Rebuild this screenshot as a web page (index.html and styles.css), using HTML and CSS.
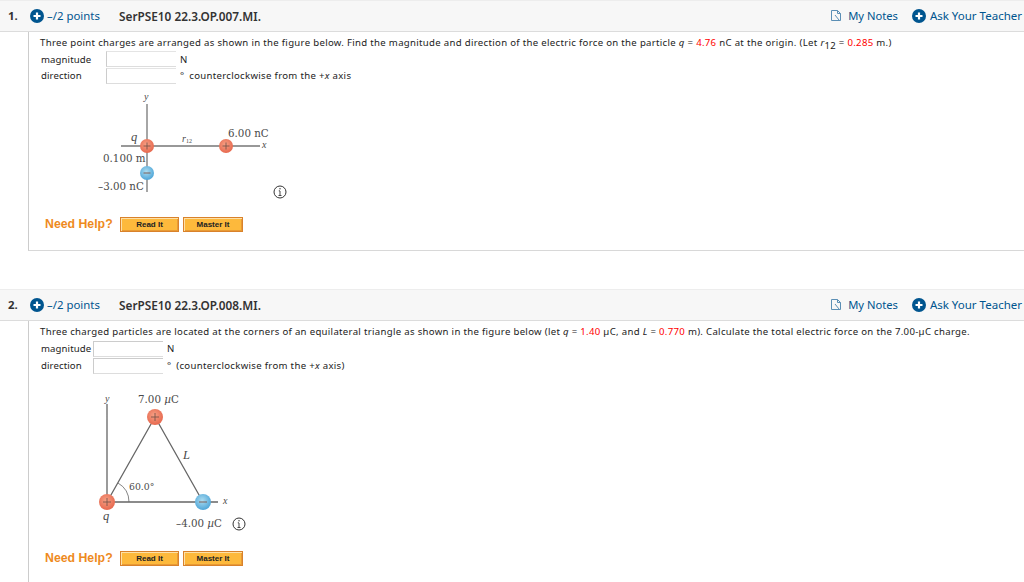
FILE: index.html
```html
<!DOCTYPE html>
<html lang="en">

<head>
  <meta charset="UTF-8" />
  <title>SerPSE10 Assignment</title>
  <link rel="stylesheet" href="styles.css">
</head>

<body>
  <div class="question first">
    <div class="q-header">
      <span class="q-number">1.</span>
      <svg class="plus-icon" viewBox="0 0 14 14"><circle cx="7" cy="7" r="7" /><path d="M7 3.500v7M3.500 7h7" /></svg>
      <span class="q-points">–/2 points</span>
      <span class="q-code">SerPSE10 22.3.OP.007.MI.</span>
      <span class="q-links">
        <svg class="notes-icon" viewBox="0 0 10 11"><path d="M.5.5h6l3 3v7h-9zM6.500.5v3h3M4 5l4 5" /></svg>
        <span class="notes-link">My Notes</span>
        <svg class="plus-icon" viewBox="0 0 14 14"><circle cx="7" cy="7" r="7" /><path d="M7 3.500v7M3.500 7h7" /></svg>
        <span>Ask Your Teacher</span>
      </span>
    </div>
    <div class="q-body body-one">
      <p class="q-text">Three point charges are arranged as shown in the figure below. Find the magnitude and direction of the electric force on the particle <i>q</i> = <span class="red">4.76</span> nC at the origin. (Let <i>r</i><sub>12</sub> = <span class="red">0.285</span> m.)</p>
      <div class="answers wide-label">
        <span class="answer-label">magnitude</span><span class="answer-box open"></span><span>N</span>
        <span class="answer-label">direction</span><span class="answer-box open"></span><span><span class="degree">°</span> counterclockwise from the +<i>x</i> axis</span>
      </div>
      <svg class="figure figure-one" viewBox="0 0 250 115">
        <defs>
          <radialGradient id="pos-fill" cx="45%" cy="40%" r="60%">
            <stop offset="0" stop-color="#f6a186" />
            <stop offset="1" stop-color="#e7684e" />
          </radialGradient>
          <radialGradient id="neg-fill" cx="45%" cy="40%" r="60%">
            <stop offset="0" stop-color="#acdcf0" />
            <stop offset="1" stop-color="#4fa6d8" />
          </radialGradient>
        </defs>
        <g class="axis">
          <path d="M107 10v88M81 52h139" />
        </g>
        <circle class="pos" cx="107" cy="52" r="7" />
        <circle class="pos" cx="186" cy="52" r="7" />
        <circle class="neg" cx="107" cy="79" r="7" />
        <path class="sign" d="M103.500 52h7M107 48.500v7M182.500 52h7M186 48.500v7M103.500 79h7" />
        <text class="fig-italic" x="104" y="6">y</text>
        <text class="fig-italic big" x="91" y="47">q</text>
        <text class="fig-italic" x="142" y="48">r<tspan class="fig-small" dy="1">12</tspan></text>
        <text class="fig-text" x="188" y="43">6.00 nC</text>
        <text class="fig-italic" x="222" y="54">x</text>
        <text class="fig-text" x="63" y="68">0.100 m</text>
        <text class="fig-text" x="58" y="96">–3.00 nC</text>
        <g class="info">
          <circle cx="240" cy="98" r="6" />
          <path d="M240 97v4M238.500 101.500h3M238.800 96.800h1.200" />
          <circle class="dot" cx="240" cy="94.800" r=".7" />
        </g>
      </svg>
      <div class="help-row">
        <span class="need-help">Need Help?</span>
        <span class="help-btn read">Read It</span>
        <span class="help-btn">Master It</span>
      </div>
    </div>
  </div>

  <div class="question">
    <div class="q-header">
      <span class="q-number">2.</span>
      <svg class="plus-icon" viewBox="0 0 14 14"><circle cx="7" cy="7" r="7" /><path d="M7 3.500v7M3.500 7h7" /></svg>
      <span class="q-points">–/2 points</span>
      <span class="q-code">SerPSE10 22.3.OP.008.MI.</span>
      <span class="q-links">
        <svg class="notes-icon" viewBox="0 0 10 11"><path d="M.5.5h6l3 3v7h-9zM6.500.5v3h3M4 5l4 5" /></svg>
        <span class="notes-link">My Notes</span>
        <svg class="plus-icon" viewBox="0 0 14 14"><circle cx="7" cy="7" r="7" /><path d="M7 3.500v7M3.500 7h7" /></svg>
        <span>Ask Your Teacher</span>
      </span>
    </div>
    <div class="q-body body-two">
      <p class="q-text">Three charged particles are located at the corners of an equilateral triangle as shown in the figure below (let <i>q</i> = <span class="red">1.40</span> µC, and <i>L</i> = <span class="red">0.770</span> m). Calculate the total electric force on the 7.00-µC charge.</p>
      <div class="answers">
        <span class="answer-label">magnitude</span><span class="answer-box"></span><span>N</span>
        <span class="answer-label">direction</span><span class="answer-box"></span><span><span class="degree">°</span> (counterclockwise from the +<i>x</i> axis)</span>
      </div>
      <svg class="figure figure-two" viewBox="0 0 250 150">
        <g class="axis dark">
          <path d="M67 21v98M67 119h111M67 119l48-85 48 85" />
          <path class="arc" d="M89 119a22 22 0 0 0-11-19" />
        </g>
        <circle class="pos" cx="67" cy="119" r="8" />
        <circle class="pos" cx="115" cy="34" r="8" />
        <circle class="neg" cx="163" cy="119" r="8" />
        <path class="sign" d="M63 119h8M67 115v8M111 34h8M115 30v8M159 119h8" />
        <text class="fig-italic" x="65" y="19">y</text>
        <text class="fig-text" x="98" y="20">7.00 <tspan class="fig-greek">µ</tspan>C</text>
        <text class="fig-italic big" x="143" y="76">L</text>
        <text class="fig-text small" x="89" y="107">60.0°</text>
        <text class="fig-italic" x="183" y="121">x</text>
        <text class="fig-italic big" x="63" y="137">q</text>
        <text class="fig-text" x="136" y="144">–4.00 <tspan class="fig-greek">µ</tspan>C</text>
        <g class="info">
          <circle cx="199" cy="141" r="6" />
          <path d="M199 140v4M197.500 144.500h3M197.800 139.800h1.200" />
          <circle class="dot" cx="199" cy="137.800" r=".7" />
        </g>
      </svg>
      <div class="help-row">
        <span class="need-help">Need Help?</span>
        <span class="help-btn read">Read It</span>
        <span class="help-btn">Master It</span>
      </div>
    </div>
  </div>
</body>

</html>
```

FILE: styles.css
```css
/* Base */
* {
  box-sizing: border-box;
}

body {
  margin: 0;
  width: 1024px;
  height: 582px;
  overflow: hidden;
  background-color: #fff;
  font-family: "Noto Sans", "Open Sans", sans-serif;
  font-size: 9.6px;
  letter-spacing: .31px;
  color: #222;
}

/* Question header */
.question.first {
  margin-bottom: 38px;
}

.q-header {
  display: flex;
  align-items: center;
  height: 32px;
  padding: 0 0 1px 8px;
  background-color: #f7f7f7;
  border-top: 1px solid #ededed;
  border-bottom: 1px solid #dcdcdc;
  font-size: 11.4px;
  letter-spacing: 0;
  color: #333;
}

.q-number {
  width: 22px;
  font-weight: 700;
}

.plus-icon {
  width: 14px;
  height: 14px;
  flex-shrink: 0;
}

.plus-icon circle {
  fill: #00558f;
}

.plus-icon path {
  stroke: #fff;
  stroke-width: 2.2;
  fill: none;
}

.q-points {
  width: 72px;
  margin-left: 3px;
  color: #00558f;
}

.q-code {
  font-weight: 600;
  font-size: 11.8px;
}

.q-links {
  display: flex;
  align-items: center;
  margin-left: auto;
  padding-right: 2px;
  font-size: 11.5px;
  color: #00558f;
}

.notes-icon {
  width: 10px;
  height: 11px;
  margin-right: 7px;
  fill: none;
  stroke: #5b8fb5;
  stroke-width: 1;
}

.notes-link {
  margin-right: 14px;
  font-size: 11.2px;
}

.q-links .plus-icon {
  margin-right: 4px;
}

/* Question body */
.q-body {
  margin-left: 28px;
  padding-left: 11px;
  border-left: 1px solid #ccc;
}

.body-one {
  height: 219px;
  border-bottom: 1px solid #d8d8d8;
}

.body-two {
  height: 262px;
}

.q-text {
  margin: 0;
  padding-top: 4px;
  height: 19px;
  line-height: 14px;
  white-space: nowrap;
}

.red {
  color: #f00;
}

sub {
  font-size: 9.5px;
  line-height: 0;
}

/* Answer rows */
.answers {
  display: grid;
  grid-template-columns: 48px 70px auto;
  grid-auto-rows: 17px;
  column-gap: 4px;
  align-items: center;
  justify-content: start;
  padding-left: 1px;
}

.wide-label {
  grid-template-columns: 61px 70px auto;
  grid-auto-rows: 16.5px;
}

.answer-label {
  letter-spacing: .1px;
  white-space: nowrap;
}

.answer-box {
  height: 16px;
  border: 1px solid #ccc;
  border-right: none;
  border-bottom-color: #ddd;
}

.answer-box.open {
  border-top-color: #e4e4e4;
}

.degree {
  margin-right: 2px;
}

/* Figures */
.figure {
  display: block;
  overflow: visible;
  letter-spacing: 0;
}

.figure-one {
  width: 250px;
  height: 115px;
  margin: 10px 0 0 0;
}

.figure-two {
  width: 250px;
  height: 150px;
  margin: 9px 0 0 0;
}

.axis path {
  fill: none;
  stroke: #777;
  stroke-width: 1.300;
}

.axis.dark path {
  stroke: #666;
}

.axis .arc {
  stroke: #555;
  stroke-width: .8;
}

.pos {
  fill: url(#pos-fill);
}

.neg {
  fill: url(#neg-fill);
}

.sign {
  fill: none;
  stroke: #7a5348;
  stroke-width: .9;
}

.fig-text,
.fig-italic {
  font-family: "DejaVu Serif", "Liberation Serif", serif;
  font-size: 10.300px;
  fill: #4a4a4a;
}

.fig-text.small {
  font-size: 9.300px;
}

.fig-italic {
  font-family: "Liberation Serif", serif;
  font-style: italic;
  font-size: 10px;
}

.fig-italic.big {
  font-size: 12.500px;
}

.fig-small {
  font-size: 6px;
  font-style: normal;
}

.fig-greek {
  font-style: italic;
}

.info circle {
  fill: none;
  stroke: #333;
  stroke-width: 1;
}

.info path {
  fill: none;
  stroke: #333;
  stroke-width: .9;
}

.info .dot {
  fill: #333;
  stroke: none;
}

/* Need help row */
.help-row {
  display: flex;
  align-items: center;
  gap: 4px;
  padding-left: 5px;
  height: 16px;
  letter-spacing: 0;
}

.body-one .help-row {
  margin-top: 7px;
}

.body-two .help-row {
  margin-top: 17px;
}

.need-help {
  width: 68px;
  margin-right: 3px;
  font-family: "Liberation Sans", sans-serif;
  font-size: 12.300px;
  font-weight: 700;
  white-space: nowrap;
  color: #ee8a1d;
}

.help-btn {
  width: 60px;
  height: 15px;
  background-color: #fdb93c;
  border: 1px solid #d9822b;
  box-shadow: inset 0 1px 0 #fde0a8, inset 1px 0 0 #fde0a8, inset -1px -1px 0 #e89a35;
  text-align: center;
  font-family: "Liberation Sans", sans-serif;
  font-size: 8px;
  font-weight: 700;
  line-height: 13px;
  color: #222;
}

.help-btn.read {
  width: 59px;
}
```
